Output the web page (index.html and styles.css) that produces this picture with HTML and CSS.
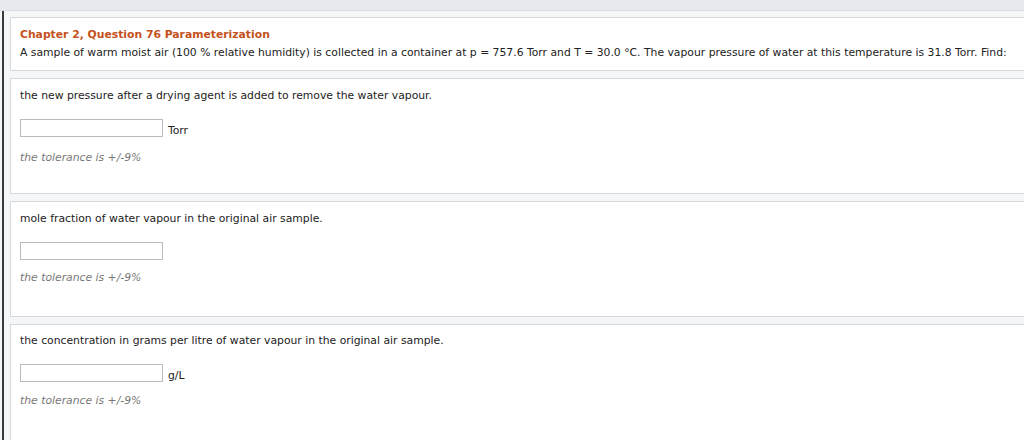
FILE: index.html
```html
<!DOCTYPE html>
<html lang="en">
<head>
    <meta charset="UTF-8">
    <title>Chapter 2, Question 76 Parameterization</title>
    <link rel="stylesheet" href="styles.css">
</head>
<body>
    <div class="topbar"></div>
    <div class="page">
        <div class="box intro">
            <div class="title">Chapter 2, Question 76 Parameterization</div>
            <div class="text">A sample of warm moist air (100 % relative humidity) is collected in a container at p = 757.6 Torr and T = 30.0 °C. The vapour pressure of water at this temperature is 31.8 Torr. Find:</div>
        </div>

        <div class="box part">
            <div class="text">the new pressure after a drying agent is added to remove the water vapour.</div>
            <div class="answer">
                <input type="text">
                <span class="unit">Torr</span>
            </div>
            <div class="tolerance">the tolerance is +/-9%</div>
        </div>

        <div class="box part">
            <div class="text">mole fraction of water vapour in the original air sample.</div>
            <div class="answer no-unit">
                <input type="text">
            </div>
            <div class="tolerance">the tolerance is +/-9%</div>
        </div>

        <div class="box part last">
            <div class="text">the concentration in grams per litre of water vapour in the original air sample.</div>
            <div class="answer">
                <input type="text">
                <span class="unit">g/L</span>
            </div>
            <div class="tolerance">the tolerance is +/-9%</div>
        </div>
    </div>
</body>
</html>
```

FILE: styles.css
```css
body {
    margin: 0;
    font-family: "DejaVu Sans", Verdana, sans-serif;
    font-size: 10.8px;
    color: #222;
    background-color: #f4f6f8;
    overflow: hidden;
}
.topbar {
    height: 10px;
    background-color: #e6eaee;
    border-bottom: 1px solid #d9dde1;
}
.page {
    margin-left: 2px;
    border-left: 2px solid #3a3a3a;
    padding: 6px 0 0 6px;
    height: 440px;
}
.box {
    box-sizing: border-box;
    background: white;
    border: 1px solid #d5d9dd;
    border-right: none;
    margin-bottom: 7px;
    padding: 0 9px;
    margin-right: -20px;
}
.intro {
    height: 54px;
    padding-top: 9px;
}
.title {
    color: #c4511c;
    font-weight: bold;
    line-height: 15px;
}
.intro .text {
    margin-top: 3px;
    line-height: 15px;
}
.part {
    height: 116px;
    padding-top: 9px;
}
.part.last {
    height: 140px;
    padding-top: 8px;
}
.part .text {
    line-height: 15px;
}
.answer {
    display: flex;
    align-items: flex-start;
    margin-top: 16px;
    height: 18px;
}
input {
    width: 143px;
    height: 18px;
    box-sizing: border-box;
    border: 1px solid #b9bdc1;
    margin: 0;
    padding: 1px 3px;
}
.unit {
    margin-left: 5px;
    margin-top: 5px;
    line-height: 14px;
}
.tolerance {
    margin-top: 14px;
    color: #777;
    font-style: italic;
}
.no-unit + .tolerance {
    margin-top: 11px;
}
.last .tolerance {
    margin-top: 12px;
}
```
